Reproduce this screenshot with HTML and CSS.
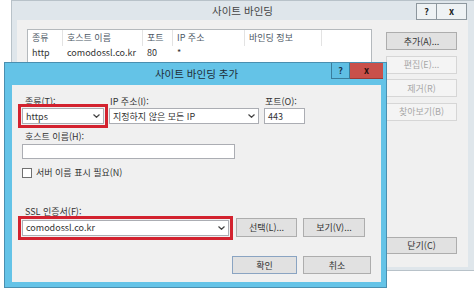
FILE: index.html
```html
<!DOCTYPE html>
<html lang="ko">
<head>
<meta charset="utf-8">
<title>사이트 바인딩</title>
<link rel="stylesheet" href="styles.css">
</head>
<body>
<div class="desk">
  <div class="back">
    <div class="back-title">
      <span></span>
      <span class="title">사이트 바인딩</span>
      <div class="back-caps">
        <span class="bcap help">?</span>
        <span class="bcap close">x</span>
      </div>
    </div>
    <div class="back-body">
      <div class="list">
        <div class="lrow lhead">
          <span>종류</span><span>호스트 이름</span><span>포트</span><span>IP 주소</span><span>바인딩 정보</span><span></span>
        </div>
        <div class="lrow litem">
          <span>http</span><span>comodossl.co.kr</span><span>80</span><span>*</span><span></span><span></span>
        </div>
      </div>
      <div class="bbtns">
        <button class="btn bbtn">추가(A)...</button>
        <button class="btn bbtn dis">편집(E)...</button>
        <button class="btn bbtn dis">제거(R)</button>
        <button class="btn bbtn dis">찾아보기(B)</button>
        <button class="btn bbtn closebtn">닫기(C)</button>
      </div>
    </div>
  </div>

  <div class="dlg">
    <div class="dlg-title">
      <span></span>
      <span class="title">사이트 바인딩 추가</span>
      <div class="dlg-caps">
        <span class="dcap help">?</span>
        <span class="dcap close">x</span>
      </div>
    </div>
    <div class="dlg-body">
      <div class="grid3">
        <span class="lbl">종류(T):</span>
        <span class="lbl lbl2">IP 주소(I):</span>
        <span class="lbl lbl3">포트(O):</span>
        <div class="field combo hl">
          <span>https</span>
          <svg class="chev" width="7" height="4" viewBox="0 0 7 4"><polyline points="0.5,0.5 3.5,3.3 6.5,0.5" fill="none" stroke="#444" stroke-width="1.2"/></svg>
        </div>
        <div class="field combo ip">
          <span>지정하지 않은 모든 IP</span>
          <svg class="chev" width="7" height="4" viewBox="0 0 7 4"><polyline points="0.5,0.5 3.5,3.3 6.5,0.5" fill="none" stroke="#444" stroke-width="1.2"/></svg>
        </div>
        <div class="field">443</div>
      </div>

      <div class="lbl host-lbl">호스트 이름(H):</div>
      <div class="field host"></div>

      <div class="chk-row">
        <span class="chk"></span>
        <span>서버 이름 표시 필요(N)</span>
      </div>

      <div class="lbl ssl-lbl">SSL 인증서(F):</div>
      <div class="ssl-row">
        <div class="field combo hl ssl">
          <span>comodossl.co.kr</span>
          <svg class="chev" width="7" height="4" viewBox="0 0 7 4"><polyline points="0.5,0.5 3.5,3.3 6.5,0.5" fill="none" stroke="#444" stroke-width="1.2"/></svg>
        </div>
        <button class="btn sel">선택(L)...</button>
        <button class="btn view">보기(V)...</button>
      </div>

      <div class="ok-row">
        <button class="btn ok">확인</button>
        <button class="btn cancel">취소</button>
      </div>
    </div>
  </div>
</div>
</body>
</html>
```
FILE: styles.css
```css
* { box-sizing: border-box; }

body {
  margin: 0;
  background: #ffffff;
  font-family: "Noto Sans CJK KR", "Noto Sans", sans-serif;
  font-size: 9px;
  color: #333333;
}

.desk {
  position: relative;
  width: 474px;
  height: 288px;
  overflow: hidden;
}

/* ---------- back window ---------- */
.back {
  position: absolute;
  left: 11px;
  top: 0;
  width: 464px;
  height: 271px;
  border: 1px solid #b8c2c9;
  background: #dfe6eb;
  padding: 0 6px 3px 5px;
  display: flex;
  flex-direction: column;
}

.back-title {
  height: 19px;
  flex: none;
  display: grid;
  grid-template-columns: 1fr auto 1fr;
  align-items: start;
}

.back-title .title {
  font-size: 10.5px;
  line-height: 19px;
  color: #444444;
  white-space: nowrap;
}

.back-caps {
  justify-self: end;
  display: flex;
  margin-top: 2px;
  margin-right: 1px;
}

.bcap {
  height: 17px;
  border: 1px solid #8d979e;
  background: #eef2f4;
  display: flex;
  align-items: center;
  justify-content: center;
  font-weight: bold;
  font-size: 9px;
  color: #222222;
}

.bcap.help { width: 21px; }
.bcap.close { width: 31px; margin-left: -1px; }

.back-body {
  flex: 1;
  background: #f0f0f0;
  display: flex;
  padding: 9px 0 13px 10px;
}

.list {
  width: 345px;
  height: 170px;
  background: #ffffff;
  border: 1px solid #b4b9bd;
  flex: none;
}

.lrow {
  display: grid;
  grid-template-columns: 35px 80px 30px 72px 77px 1fr;
}

.lrow span {
  padding-left: 4px;
  white-space: nowrap;
}

.lhead { height: 16px; }

.lhead span {
  border-right: 1px solid #e3e3e3;
  line-height: 15px;
  color: #4d5866;
}

.lhead span:last-child { border-right: none; }

.litem {
  height: 14px;
  line-height: 14px;
  color: #333333;
}

.bbtns {
  margin-left: 14px;
  width: 71px;
  display: flex;
  flex-direction: column;
  gap: 5.5px;
  padding-top: 3px;
}

/* ---------- buttons ---------- */
.btn {
  font-family: inherit;
  font-size: 9px;
  color: #333333;
  background: #e1e1e1;
  border: 1px solid #adadad;
  padding: 0;
  margin: 0;
  display: flex;
  align-items: center;
  justify-content: center;
  line-height: 1;
  white-space: nowrap;
}

.btn.dis {
  background: #f4f4f4;
  border-color: #d6d6d6;
  color: #a8a8a8;
}

.bbtn { height: 18px; width: 71px; }
.bbtn.closebtn { margin-top: auto; height: 17px; }

/* ---------- front dialog ---------- */
.dlg {
  position: absolute;
  left: 4px;
  top: 62px;
  width: 383px;
  height: 226px;
  border: 1px solid #4a8fb0;
  background: #64c3e7;
  padding: 0 5px 5px 7px;
  display: flex;
  flex-direction: column;
}

.dlg-title {
  height: 22px;
  flex: none;
  display: grid;
  grid-template-columns: 1fr auto 1fr;
  align-items: start;
}

.dlg-title .title {
  font-size: 10.5px;
  line-height: 22px;
  color: #1e2c36;
  white-space: nowrap;
}

.dlg-caps {
  justify-self: end;
  display: flex;
  margin-right: -2px;
}

.dcap {
  height: 16px;
  display: flex;
  align-items: center;
  justify-content: center;
  font-weight: bold;
  font-size: 9px;
}

.dcap.help {
  width: 19px;
  background: #5fbfe4;
  border: 1px solid #3a7d9c;
  border-top: none;
  color: #1a3550;
}

.dcap.close {
  width: 33px;
  background: #c9504a;
  border-bottom: 1px solid #9c3a35;
  color: #2a1010;
}

.dlg-body {
  flex: 1;
  background: #f0f0f0;
  padding: 10px 0 0 10px;
}

.grid3 {
  display: grid;
  grid-template-columns: 82px 150px 41px;
  column-gap: 5px;
}

.lbl {
  display: block;
  height: 13px;
  line-height: 13px;
  padding-left: 3px;
  white-space: nowrap;
  color: #333333;
}

.lbl2, .lbl3 { padding-left: 1px; }

.field {
  height: 16px;
  background: #ffffff;
  border: 1px solid #abadb3;
  display: flex;
  align-items: center;
  padding-left: 3px;
  white-space: nowrap;
  color: #333333;
}

.combo {
  justify-content: space-between;
  padding-right: 3px;
}

.chev { flex: none; }

.hl {
  outline: 3px solid #d3222f;
  outline-offset: 1px;
}

.host-lbl { margin-top: 6px; }

.field.host {
  width: 213px;
  height: 15px;
  margin-top: 1px;
}

.chk-row {
  display: flex;
  align-items: center;
  gap: 4px;
  margin-top: 9px;
  height: 10px;
  line-height: 10px;
  white-space: nowrap;
}

.chk {
  width: 10px;
  height: 10px;
  border: 1px solid #707070;
  background: #ffffff;
  flex: none;
}

.ssl-lbl { margin-top: 27px; }

.ssl-row {
  display: flex;
  align-items: center;
  height: 19px;
}

.field.ssl { width: 207px; }

.btn.sel { width: 61px; height: 19px; margin-left: 7px; }
.btn.view { width: 62px; height: 19px; margin-left: 6px; }

.ok-row {
  display: flex;
  margin-top: 19px;
  margin-left: 210px;
  gap: 6px;
}

.btn.ok { width: 65px; height: 18px; border-color: #8aa4c2; }
.btn.cancel { width: 68px; height: 18px; }
```
